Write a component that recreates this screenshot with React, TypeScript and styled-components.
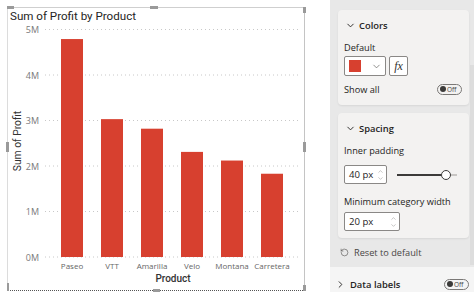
import React from 'react';
import styled, { createGlobalStyle } from 'styled-components';
import { ChevronDown, ChevronRight, ChevronUp, RotateCcw } from 'lucide-react';

const GlobalStyle = createGlobalStyle`
  html, body {
    margin: 0;
    padding: 0;
    background: #fff;
  }
  #root {
    width: 474px;
    height: 292px;
    overflow: hidden;
  }
`;

const BAR = '#d7402f';
const STEP = 45.5;
const BASE = 233;

const products = [
  { name: 'Paseo', value: 4.79 },
  { name: 'VTT', value: 3.03 },
  { name: 'Amarilla', value: 2.82 },
  { name: 'Velo', value: 2.31 },
  { name: 'Montana', value: 2.12 },
  { name: 'Carretera', value: 1.83 },
];

const Page = styled.div`
  display: flex;
  width: 474px;
  height: 292px;
  background: #fff;
  font-family: 'Open Sans', 'Noto Sans', sans-serif;
`;

const ChartArea = styled.div`
  width: 330px;
  flex-shrink: 0;
  padding: 7px 0 0 7px;
  box-sizing: border-box;
`;

const Visual = styled.div`
  position: relative;
  box-sizing: border-box;
  width: 298px;
  height: 284px;
  border-top: 1px solid #cfcfcf;
  border-left: 1px solid #dcdcdc;
  border-right: 1px solid #c4c4c4;
  border-bottom: 1px dotted #555;
  display: grid;
  grid-template-columns: 14px 1fr;
  grid-template-rows: 16px 246px 1fr;
`;

const Title = styled.div`
  grid-column: 1 / 3;
  padding-left: 2px;
  font: 11.6px/16px 'Roboto', sans-serif;
  color: #252423;
  white-space: nowrap;
`;

const YAxisTitle = styled.div`
  display: flex;
  align-items: center;
  justify-content: center;
  padding: 0 0 12px 4px;

  span {
    writing-mode: vertical-rl;
    transform: rotate(180deg);
    font: 10.3px 'Roboto', sans-serif;
    color: #333;
    white-space: nowrap;
  }
`;

const XAxisTitle = styled.div`
  grid-column: 2;
  padding-left: 20px;
  text-align: center;
  font: 500 10px/18px 'Roboto', sans-serif;
  color: #333;
`;

const Plot = styled.svg`
  display: block;
  font-family: 'Open Sans', sans-serif;
  font-size: 9px;
`;

const Handle = styled.div<{ $x: string; $y: string; $w: number; $h: number }>`
  position: absolute;
  ${(p) => p.$x};
  ${(p) => p.$y};
  width: ${(p) => p.$w}px;
  height: ${(p) => p.$h}px;
  background: #9a9a9a;
`;

const Pane = styled.div`
  position: relative;
  flex: 1;
  display: flex;
  flex-direction: column;
  background: #e8e8e8;
  padding-top: 10px;
  color: #252423;
  font-size: 9.2px;
`;

const ScrollTrack = styled.div`
  position: absolute;
  right: 0;
  top: 65px;
  width: 4px;
  height: 200px;
  background: #dddddd;
`;

const Card = styled.section<{ $pb: number }>`
  position: relative;
  z-index: 1;
  margin: 0 5px 8px 8px;
  padding: 6px 7px ${(p) => p.$pb}px 6px;
  background: #f3f2f1;
  border-radius: 4px;
  box-shadow: 0 1px 2px rgba(0, 0, 0, 0.08);
`;

const CardHeader = styled.div`
  display: flex;
  align-items: center;
  gap: 3px;
  height: 19px;
  margin-bottom: 1px;
  font-weight: 600;
  font-size: 9.4px;
  padding-left: 1px;
`;

const Label = styled.div<{ $mt: number }>`
  margin-top: ${(p) => p.$mt}px;
  line-height: 14px;
  white-space: nowrap;
`;

const Row = styled.div<{ $mt: number }>`
  display: flex;
  align-items: center;
  gap: 3px;
  margin-top: ${(p) => p.$mt}px;
`;

const SpreadRow = styled(Row)`
  justify-content: space-between;
  height: 16px;
`;

const ColorPicker = styled.div`
  box-sizing: border-box;
  width: 42px;
  height: 20px;
  display: flex;
  align-items: center;
  justify-content: space-between;
  padding: 0 3px 0 4px;
  background: #fff;
  border: 1px solid #8a8886;
  border-radius: 2px;
`;

const Swatch = styled.div`
  width: 12px;
  height: 12px;
  background: ${BAR};
`;

const FxButton = styled.div`
  box-sizing: border-box;
  width: 19px;
  height: 20px;
  display: flex;
  align-items: center;
  justify-content: center;
  background: #fff;
  border: 1px solid #8a8886;
  border-radius: 2px;
  font: italic 12px 'Liberation Serif', serif;
  color: #323130;
`;

const Toggle = styled.div`
  box-sizing: border-box;
  width: 25px;
  height: 11px;
  display: flex;
  align-items: center;
  gap: 1px;
  padding-left: 2px;
  border: 1px solid #7a7876;
  border-radius: 6px;
  font-size: 6.5px;
  font-weight: 400;
  color: #444;

  &::before {
    content: '';
    width: 6px;
    height: 6px;
    border-radius: 50%;
    background: #3b3a39;
  }
`;

const NumberInput = styled.div<{ $w: number }>`
  box-sizing: border-box;
  width: ${(p) => p.$w}px;
  height: 19px;
  display: flex;
  align-items: center;
  justify-content: space-between;
  padding: 0 2px 0 4px;
  background: #fff;
  border: 1px solid #8a8886;
  border-radius: 2px;
  font-size: 9.6px;
`;

const Spinner = styled.div`
  display: flex;
  flex-direction: column;
  color: #a19f9d;
  line-height: 0;
`;

const Slider = styled.div`
  display: flex;
  align-items: center;
  margin-left: 7px;
`;

const Track = styled.div<{ $w: number; $c: string }>`
  width: ${(p) => p.$w}px;
  height: 2px;
  background: ${(p) => p.$c};
`;

const Knob = styled.div`
  box-sizing: border-box;
  width: 10px;
  height: 10px;
  border-radius: 50%;
  border: 1.5px solid #3b3a39;
  background: #fff;
`;

const ResetRow = styled.div`
  display: flex;
  align-items: center;
  gap: 5px;
  height: 18px;
  margin: -1px 0 7px 10px;
  color: #484644;
`;

const Section = styled.div`
  position: relative;
  z-index: 1;
  flex: 1;
  background: #f5f5f5;
  padding: 9px 5px 0 5px;
`;

const SectionRow = styled.div`
  display: flex;
  align-items: center;
  height: 16px;
  gap: 4px;
  font-weight: 600;
  font-size: 9.4px;

  & > :last-child {
    margin-left: auto;
  }
`;

function Chart() {
  return (
    <Plot width={281} height={246} viewBox="0 0 281 246">
      {[0, 1, 2, 3, 4, 5].map((i) => {
        const y = BASE - STEP * i;
        return (
          <g key={i}>
            <line x1={23} x2={277} y1={y} y2={y} stroke="#c8c8c8" strokeDasharray="1 3" />
            <text x={17} y={y} textAnchor="end" dominantBaseline="central" fill="#7a7a7a">
              {i}M
            </text>
          </g>
        );
      })}
      {products.map((p, i) => {
        const h = p.value * STEP;
        return (
          <g key={p.name}>
            <rect x={39 + 40 * i} y={BASE - h} width={22} height={h} fill={BAR} />
            <text
              x={50 + 40 * i}
              y={241}
              textAnchor="middle"
              dominantBaseline="central"
              fill="#666"
              fontSize={8}
            >
              {p.name}
            </text>
          </g>
        );
      })}
    </Plot>
  );
}

export default function App() {
  return (
    <>
      <GlobalStyle />
      <Page>
        <ChartArea>
          <Visual>
            <Title>Sum of Profit by Product</Title>
            <YAxisTitle>
              <span>Sum of Profit</span>
            </YAxisTitle>
            <Chart />
            <XAxisTitle>Product</XAxisTitle>
            <Handle $x="left: -1px" $y="top: -2px" $w={7} $h={3} />
            <Handle $x="left: 142px" $y="top: -2px" $w={8} $h={3} />
            <Handle $x="right: -2px" $y="top: -1px" $w={3} $h={6} />
            <Handle $x="left: -2px" $y="top: 134px" $w={3} $h={10} />
            <Handle $x="right: -2px" $y="top: 134px" $w={3} $h={10} />
            <Handle $x="left: -1px" $y="bottom: -1px" $w={2} $h={8} />
            <Handle $x="left: 145px" $y="bottom: -2px" $w={7} $h={3} />
            <Handle $x="right: -2px" $y="bottom: -1px" $w={3} $h={6} />
          </Visual>
        </ChartArea>
        <Pane>
          <ScrollTrack />
          <Card $pb={8}>
            <CardHeader>
              <ChevronDown size={11} strokeWidth={2} />
              Colors
            </CardHeader>
            <Label $mt={6}>Default</Label>
            <Row $mt={1}>
              <ColorPicker>
                <Swatch />
                <ChevronDown size={11} strokeWidth={1.5} color="#605e5c" />
              </ColorPicker>
              <FxButton>fx</FxButton>
            </Row>
            <SpreadRow $mt={5}>
              Show all
              <Toggle>Off</Toggle>
            </SpreadRow>
          </Card>
          <Card $pb={7}>
            <CardHeader>
              <ChevronDown size={11} strokeWidth={2} />
              Spacing
            </CardHeader>
            <Label $mt={6}>Inner padding</Label>
            <Row $mt={7}>
              <NumberInput $w={43}>
                40 px
                <Spinner>
                  <ChevronUp size={7} strokeWidth={2} />
                  <ChevronDown size={7} strokeWidth={2} />
                </Spinner>
              </NumberInput>
              <Slider>
                <Track $w={44} $c="#3b3a39" />
                <Knob />
                <Track $w={6} $c="#c8c6c4" />
              </Slider>
            </Row>
            <Label $mt={11}>Minimum category width</Label>
            <Row $mt={3}>
              <NumberInput $w={56}>
                20 px
                <Spinner>
                  <ChevronUp size={7} strokeWidth={2} />
                  <ChevronDown size={7} strokeWidth={2} />
                </Spinner>
              </NumberInput>
            </Row>
          </Card>
          <ResetRow>
            <RotateCcw size={9} strokeWidth={1.5} />
            Reset to default
          </ResetRow>
          <Section>
            <SectionRow>
              <ChevronRight size={11} strokeWidth={2} />
              Data labels
              <Toggle>Off</Toggle>
            </SectionRow>
          </Section>
        </Pane>
      </Page>
    </>
  );
}
